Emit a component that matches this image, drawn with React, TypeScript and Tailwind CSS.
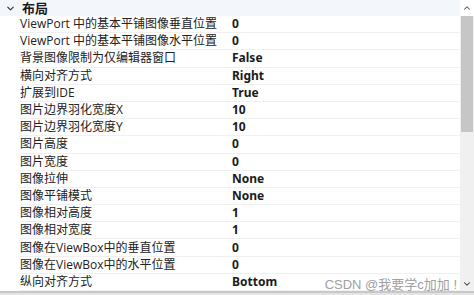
import { ChevronDown, ChevronUp } from "lucide-react";

const rows: [string, string][] = [
  ["ViewPort 中的基本平铺图像垂直位置", "0"],
  ["ViewPort 中的基本平铺图像水平位置", "0"],
  ["背景图像限制为仅编辑器窗口", "False"],
  ["横向对齐方式", "Right"],
  ["扩展到IDE", "True"],
  ["图片边界羽化宽度X", "10"],
  ["图片边界羽化宽度Y", "10"],
  ["图片高度", "0"],
  ["图片宽度", "0"],
  ["图像拉伸", "None"],
  ["图像平铺模式", "None"],
  ["图像相对高度", "1"],
  ["图像相对宽度", "1"],
  ["图像在ViewBox中的垂直位置", "0"],
  ["图像在ViewBox中的水平位置", "0"],
  ["纵向对齐方式", "Bottom"],
];

export default function App() {
  return (
    <div
      className="relative w-[474px] h-[295px] overflow-hidden bg-white text-[#1a1a1a]"
      style={{ fontFamily: '"Open Sans", "Noto Sans CJK SC", sans-serif' }}
    >
      <div className="flex h-[291px]">
        <div className="flex-1 flex flex-col">
          <div className="h-[16px] flex items-center bg-[#f3f7fc]">
            <ChevronDown className="w-[11px] h-[11px] ml-[5px] text-[#333]" strokeWidth={2.5} />
            <span className="ml-[6px] text-[13px] font-bold leading-none">布局</span>
          </div>
          {rows.map(([label, value], i) => (
            <div key={i} className="h-[17.2px] flex items-center">
              <div className="w-[20px] h-full" />
              <div className="flex-1 h-full flex items-center border-b border-[#f0f0f0]">
                <span className="w-[212px] text-[12px] leading-none whitespace-nowrap text-[#222]">
                  {label}
                </span>
                <span
                  className="text-[12px] font-bold leading-none"
                  style={{ fontFamily: '"Noto Sans", sans-serif' }}
                >
                  {value}
                </span>
              </div>
            </div>
          ))}
        </div>
        <div className="w-[14px] flex flex-col bg-[#f0f0f0]">
          <div className="h-[16px] flex items-center justify-center bg-white">
            <ChevronUp className="w-[10px] h-[10px] text-[#555]" strokeWidth={2.5} />
          </div>
          <div className="h-[116px] mx-[1px] bg-[#c6c6c6]" />
          <div className="flex-1" />
          <div className="h-[14px] flex items-center justify-center">
            <ChevronDown className="w-[10px] h-[10px] text-[#333]" strokeWidth={2.5} />
          </div>
        </div>
      </div>
      <div className="h-[2px] bg-[#c8c8c8]" />
      <div className="h-[2px] bg-[#e4e4e4]" />
      <div
        className="absolute right-[17px] top-[275px] text-[13px] text-[#a0a0a0] whitespace-nowrap"
        style={{ fontFamily: '"Liberation Sans", "Noto Sans CJK SC", sans-serif' }}
      >
        CSDN @我要学c加加 !
      </div>
    </div>
  );
}
